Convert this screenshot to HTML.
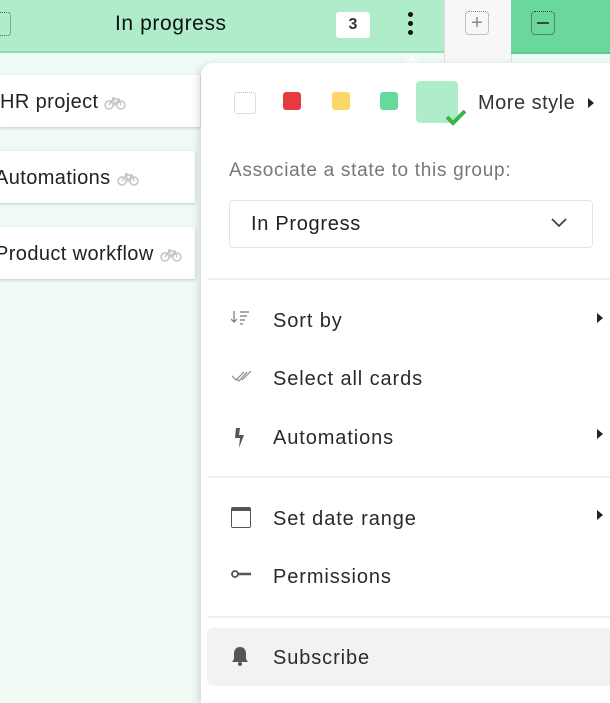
<!DOCTYPE html>
<html><head><style>
body{margin:0;width:610px;height:689px;overflow:hidden;position:relative;background:#eefaf3;font-family:"Liberation Sans",sans-serif;}
.a{position:absolute}
.hdr{left:0;top:0;width:444px;height:51px;background:#aeecca;border-bottom:2px solid #8fdcb2}
.card{left:0;width:200px;height:52px;background:#fff;box-shadow:0 1px 3px rgba(0,0,0,.2);font-size:20px;color:#222;line-height:54px;letter-spacing:0.4px;white-space:nowrap;overflow:hidden}
.menu{left:201px;top:63px;width:420px;height:640px;background:#fff;border-radius:12px 0 0 0;box-shadow:-2px 2px 8px rgba(0,0,0,.15)}
.item{position:absolute;left:72px;font-size:20px;color:#2a2a2a;letter-spacing:0.9px}
.sep{position:absolute;left:7px;right:0;height:2px;background:#f0f0f0}
.tri{position:absolute;left:396px;width:0;height:0;border-top:5px solid transparent;border-bottom:5px solid transparent;border-left:6px solid #222}
.bk{display:inline-block;vertical-align:middle;margin-left:6px}
</style></head><body>
<div class="a hdr"></div>
<div class="a" style="left:0;top:12px;width:10px;height:22px;border:1px dotted #555;border-left:none;border-radius:0 3px 3px 0"></div>
<div class="a" style="left:115px;top:12px;font-size:21px;color:#111;letter-spacing:0.6px">In progress</div>
<div class="a" style="left:336px;top:12px;width:34px;height:26px;background:#fff;border-radius:3px;text-align:center;line-height:26px;font-size:16px;font-weight:bold;color:#333">3</div>
<div class="a" style="left:408px;top:12px;width:5px;height:5px;border-radius:50%;background:#111;box-shadow:0 9px 0 #111,0 18px 0 #111"></div>
<div class="a" style="left:444px;top:0;width:66px;height:62px;background:#f7f7f7;border-left:1px solid #ddd;border-right:1px solid #ddd"></div>
<div class="a" style="left:465px;top:11px;width:22px;height:22px;border:1px dotted #888;border-radius:4px;text-align:center;line-height:22px;color:#888;font-size:20px">+</div>
<div class="a" style="left:511px;top:0;width:99px;height:52px;background:#6ad89b;border-bottom:2px solid #5cc98c"></div>
<div class="a" style="left:531px;top:11px;width:22px;height:22px;border:1px dotted #333;border-radius:4px"><div style="position:absolute;left:5px;top:10px;width:12px;height:2px;background:#444"></div></div>
<div class="a card" style="top:75px">HR project<svg class="bk" width="22" height="14"><circle cx="5" cy="9" r="4" fill="none" stroke="#c4c4c4" stroke-width="1.5"/><circle cx="17" cy="9" r="4" fill="none" stroke="#c4c4c4" stroke-width="1.5"/><path d="M5 9l4-6h6l2 6M9 3l2 6 4-6M8 2h3" stroke="#c4c4c4" stroke-width="1.5" fill="none"/></svg></div>
<div class="a card" style="top:151px;left:-5px">Automations<svg class="bk" width="22" height="14"><circle cx="5" cy="9" r="4" fill="none" stroke="#c4c4c4" stroke-width="1.5"/><circle cx="17" cy="9" r="4" fill="none" stroke="#c4c4c4" stroke-width="1.5"/><path d="M5 9l4-6h6l2 6M9 3l2 6 4-6M8 2h3" stroke="#c4c4c4" stroke-width="1.5" fill="none"/></svg></div>
<div class="a card" style="top:227px;left:-5px">Product workflow<svg class="bk" width="22" height="14"><circle cx="5" cy="9" r="4" fill="none" stroke="#c4c4c4" stroke-width="1.5"/><circle cx="17" cy="9" r="4" fill="none" stroke="#c4c4c4" stroke-width="1.5"/><path d="M5 9l4-6h6l2 6M9 3l2 6 4-6M8 2h3" stroke="#c4c4c4" stroke-width="1.5" fill="none"/></svg></div>
<div class="a" style="left:404px;top:56px;width:0;height:0;border-left:8px solid transparent;border-right:8px solid transparent;border-bottom:8px solid #fff"></div>
<div class="a menu">
 <div class="a" style="left:33px;top:29px;width:20px;height:20px;border:1px dotted #bbb;border-radius:3px"></div>
 <div class="a" style="left:82px;top:29px;width:18px;height:18px;background:#e53a3e;border-radius:3px"></div>
 <div class="a" style="left:131px;top:29px;width:18px;height:18px;background:#fdd766;border-radius:3px"></div>
 <div class="a" style="left:179px;top:29px;width:18px;height:18px;background:#66d99b;border-radius:3px"></div>
 <div class="a" style="left:215px;top:18px;width:42px;height:42px;background:#aeecca;border-radius:4px"></div>
 <svg class="a" style="left:243px;top:45px" width="24" height="18"><path d="M3 9l6 6 12-12" stroke="#3cb54a" stroke-width="4" fill="none"/></svg>
 <div class="a" style="left:277px;top:29px;font-size:20px;color:#333;letter-spacing:0.5px">More style</div>
 <div class="tri" style="left:387px;top:35px"></div>
 <div class="a" style="left:28px;top:97px;font-size:19px;color:#777;letter-spacing:0.7px">Associate a state to this group:</div>
 <div class="a" style="left:28px;top:137px;width:362px;height:46px;border:1px solid #e3e3e3;border-radius:4px"></div>
 <div class="a" style="left:50px;top:150px;font-size:20px;color:#222;letter-spacing:0.7px">In Progress</div>
 <svg class="a" style="left:350px;top:155px" width="16" height="10"><path d="M1 1l7 7 7-7" stroke="#444" stroke-width="1.8" fill="none"/></svg>
 <div class="sep" style="top:215px"></div>
 <svg class="a" style="left:30px;top:247px" width="20" height="16"><path d="M3 1v11M0 9l3 3 3-3M9 2h9M9 6h7M9 10h5M9 14h3" stroke="#777" stroke-width="1.2" fill="none"/></svg>
 <div class="item" style="top:247px">Sort by</div><div class="tri" style="top:250px"></div>
 <svg class="a" style="left:30px;top:308px" width="22" height="12"><path d="M1 5l4 4 8-8M6 8l2 2 8-9M11 9l9-9" stroke="#888" stroke-width="1.2" fill="none"/></svg>
 <div class="item" style="top:305px">Select all cards</div>
 <svg class="a" style="left:33px;top:364px" width="12" height="22"><path d="M2 1h4l-1 7h5L5 21l1-10H1z" fill="#555"/></svg>
 <div class="item" style="top:364px">Automations</div><div class="tri" style="top:366px"></div>
 <div class="sep" style="top:413px"></div>
 <div class="a" style="left:30px;top:444px;width:18px;height:16px;border:1.5px solid #555;border-top-width:4px;border-radius:2px"></div>
 <div class="item" style="top:445px">Set date range</div><div class="tri" style="top:447px"></div>
 <svg class="a" style="left:30px;top:506px" width="22" height="10"><circle cx="4" cy="5" r="3" fill="none" stroke="#555" stroke-width="1.8"/><path d="M7 5h13" stroke="#555" stroke-width="2.5"/></svg>
 <div class="item" style="top:503px">Permissions</div>
 <div class="sep" style="top:553px"></div>
 <div class="a" style="left:6px;top:565px;width:410px;height:58px;background:#f2f2f2;border-radius:6px"></div>
 <svg class="a" style="left:30px;top:583px" width="18" height="22"><path d="M9 1c-4 0-6 3-6 7v5l-2 3h16l-2-3V8c0-4-2-7-6-7z" fill="#555"/><circle cx="9" cy="18" r="2" fill="#555"/></svg>
 <div class="item" style="top:584px">Subscribe</div>
</div>
</body></html>
